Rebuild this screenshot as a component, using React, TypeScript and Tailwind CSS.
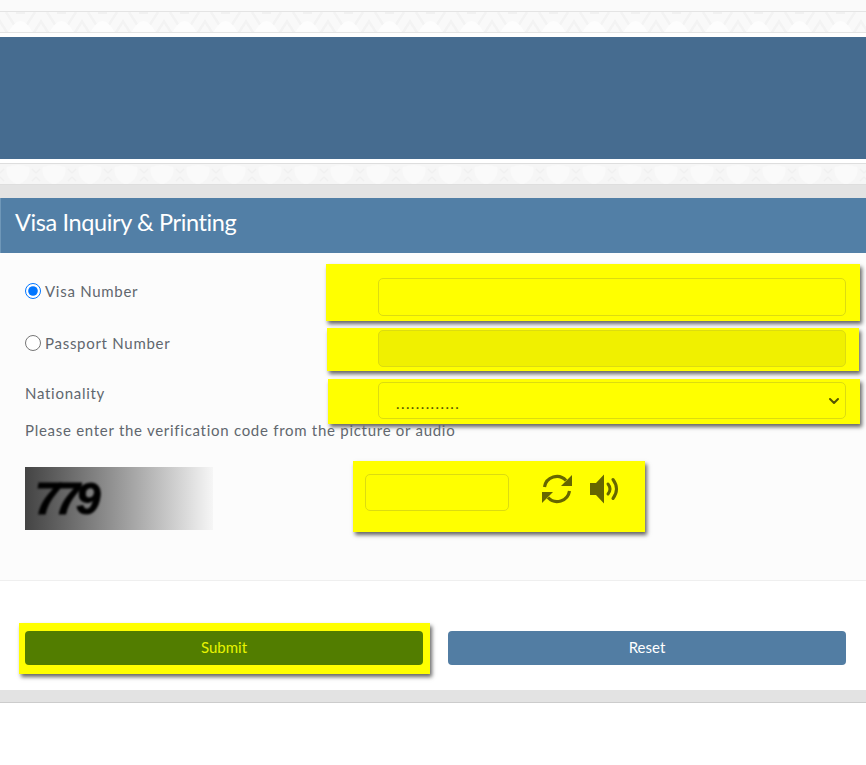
import { ChevronDown } from "lucide-react";

const LABEL = "font-['Lato',sans-serif] text-[15px] tracking-[0.72px] text-[#61676e]";

function ArchBand() {
  return (
    <svg className="block h-[22px] w-full border-y border-[#e4e4e4] bg-[#f9f9f9]" aria-hidden="true">
      <defs>
        <pattern id="arches" width="41" height="22" patternUnits="userSpaceOnUse">
          <path d="M6 0 L20 22 M35 0 L21 22 M-6 0 L8 22 M47 0 L33 22" stroke="#f3f3f3" strokeWidth="2.5" fill="none" />
          <path d="M8 21 Q20.5 -3 33 21 Z" fill="#fdfdfd" />
          <path d="M16 1 H25" stroke="#f1f1f1" strokeWidth="2" />
        </pattern>
      </defs>
      <rect width="100%" height="100%" fill="url(#arches)" />
    </svg>
  );
}

function HeartBand() {
  return (
    <svg className="block h-[22px] w-full border-y border-[#dedede] bg-[#f6f6f6]" aria-hidden="true">
      <defs>
        <pattern id="hearts" width="36" height="22" patternUnits="userSpaceOnUse">
          <path d="M7 3 Q18 -1 29 3 Q32 14 18 21 Q4 14 7 3 Z" fill="#fafafa" />
          <path d="M0 9 L4 5 M36 9 L32 5 M0 13 L4 17 M36 13 L32 17" stroke="#f0f0f0" strokeWidth="1.5" />
        </pattern>
      </defs>
      <rect width="100%" height="100%" fill="url(#hearts)" />
    </svg>
  );
}

function RefreshIcon() {
  return (
    <svg viewBox="0 0 32 32" className="h-[32px] w-[32px] text-[#666600]" aria-hidden="true">
      <path d="M3.5 14 A12.5 12.5 0 0 1 25 7.5" stroke="currentColor" strokeWidth="3.2" fill="none" />
      <path d="M31 2 V13 H20 Z" fill="currentColor" />
      <path d="M28.5 18 A12.5 12.5 0 0 1 7 24.5" stroke="currentColor" strokeWidth="3.2" fill="none" />
      <path d="M1 30 V19 H12 Z" fill="currentColor" />
    </svg>
  );
}

function SpeakerIcon() {
  return (
    <svg viewBox="0 0 32 32" className="h-[32px] w-[32px] text-[#666600]" aria-hidden="true">
      <path d="M1 10 H7 L15 1.5 V30.5 L7 22 H1 Z" fill="currentColor" />
      <path d="M19 11 Q23 16 19 21" stroke="currentColor" strokeWidth="3" strokeLinecap="round" fill="none" />
      <path d="M24 6.5 Q31 16 24 25.5" stroke="currentColor" strokeWidth="3" strokeLinecap="round" fill="none" />
    </svg>
  );
}

export default function App() {
  const yellowBox = "bg-[#ffff00] shadow-[2px_3px_4px_rgba(0,0,0,0.6)]";
  const field = "block w-[468px] rounded-[5px] border border-[#dcdc10] outline-none";

  return (
    <div className="min-h-[765px] bg-white font-['Lato',sans-serif]">
      <div className="h-[11px] bg-[#fafafa]" />
      <ArchBand />
      <div className="h-[4px] bg-white" />
      <div className="h-[122px] bg-[#466c90]" />
      <div className="h-[4px] bg-white" />
      <HeartBand />
      <div className="h-[13px] bg-[#e3e3e3]" />

      <h1 className="flex h-[55px] items-center border-l border-[#6f97b8] bg-[#527fa6] pb-[6px] pl-[14px] text-[23.5px] font-normal tracking-[-0.38px] text-white">
        Visa Inquiry &amp; Printing
      </h1>

      <div className="h-[328px] border-b border-[#efefef] bg-[#fcfcfc] pt-[11px]">
        <div className="flex items-start">
          <label className={`flex h-[57px] w-[326px] items-center gap-[4px] pl-[25px] pb-[2px] ${LABEL}`}>
            <input type="radio" name="kind" defaultChecked className="m-0 mb-[2px] h-4 w-4 accent-[#0075ff]" />
            Visa Number
          </label>
          <div className={`h-[57px] w-[534px] pl-[52px] pt-[14px] ${yellowBox}`}>
            <input type="text" className={`h-[38px] bg-[#ffff00] ${field}`} />
          </div>
        </div>

        <div className="mt-[7px] flex items-start">
          <label className={`flex h-[43px] w-[327px] items-center gap-[4px] pl-[25px] pb-[12px] ${LABEL}`}>
            <input type="radio" name="kind" className="m-0 mb-[2px] h-4 w-4" />
            Passport Number
          </label>
          <div className={`h-[43px] w-[532px] pl-[51px] pt-[2px] ${yellowBox}`}>
            <input type="text" disabled className={`h-[37px] bg-[#f0f000] ${field}`} />
          </div>
        </div>

        <div className="mt-[8px] flex items-start">
          <div className={`flex h-[45px] w-[328px] items-center pl-[25px] pb-[16px] ${LABEL}`}>Nationality</div>
          <div className={`h-[45px] w-[532px] pl-[50px] pt-[3px] ${yellowBox}`}>
            <div className="relative w-[468px]">
              <select className="block h-[37px] w-[468px] appearance-none rounded-[5px] border border-[#dcdc10] bg-[#ffff00] pl-[17px] pt-[6px] font-['Lato',sans-serif] text-[15px] tracking-[1.4px] text-[#555500] outline-none">
                <option>.............</option>
              </select>
              <ChevronDown className="pointer-events-none absolute right-[4px] top-[11px] h-[16px] w-[16px] text-[#555500]" strokeWidth={3} />
            </div>
          </div>
        </div>

        <p className={`relative mt-[-4px] pl-[25px] leading-[20px] ${LABEL}`}>
          Please enter the verification code from the picture or audio
        </p>

        <div className="mt-[21px] flex items-start pl-[25px]">
          <div className="mt-[6px] flex h-[63px] w-[188px] items-center bg-gradient-to-r from-[#444444] to-[#f6f6f6] pl-[10px]">
            <span className="font-['Liberation_Sans',sans-serif] text-[44px] font-bold italic tracking-[-4px] text-black blur-[0.9px] [-webkit-text-stroke:1px_black]">
              779
            </span>
          </div>
          <div className={`ml-[140px] flex h-[71px] w-[292px] items-start pl-[12px] pt-[13px] ${yellowBox}`}>
            <input type="text" className="block h-[37px] w-[144px] rounded-[5px] border border-[#dcdc10] bg-[#ffff00] outline-none" />
            <div className="ml-[32px] mt-[-1px]">
              <RefreshIcon />
            </div>
            <div className="ml-[16px] mt-[-1px]">
              <SpeakerIcon />
            </div>
          </div>
        </div>
      </div>

      <div className="flex h-[109px] items-start bg-white pl-[19px] pt-[42px]">
        <div className={`h-[51px] w-[411px] pl-[6px] pt-[8px] ${yellowBox}`}>
          <button type="button" className="h-[34px] w-[398px] rounded-[4px] bg-[#527d00] pb-[2px] text-[15px] text-[#e8f500]">
            Submit
          </button>
        </div>
        <button type="button" className="ml-[18px] mt-[8px] h-[34px] w-[398px] rounded-[4px] bg-[#527da3] pb-[2px] text-[15px] text-white">
          Reset
        </button>
      </div>

      <div className="h-[13px] border-b border-[#cccccc] bg-[#e3e3e3]" />
    </div>
  );
}
